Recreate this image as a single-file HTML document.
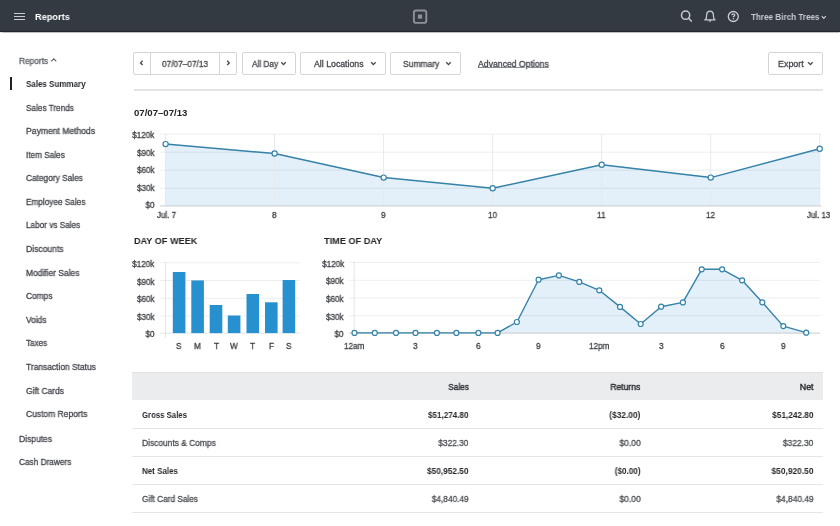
<!DOCTYPE html>
<html><head><meta charset="utf-8"><title>Reports</title>
<style>
*{margin:0;padding:0;box-sizing:border-box}
html,body{width:840px;height:526px;overflow:hidden;background:#fff;font-family:"Liberation Sans", sans-serif}
.t{position:absolute;white-space:nowrap;line-height:1;will-change:transform}
.box{position:absolute;border:1px solid #d3d5d8;border-radius:2px;background:#fff}
.ab{position:absolute}
</style></head>
<body>
<header class="ab" style="left:0;top:0;width:840px;height:31.8px;background:#343a42;border-bottom:1px solid #22262b;box-shadow:0 0.6px 1px rgba(0,0,0,.25)"></header>
<div class="ab" style="left:13.8px;top:12.70px;width:11.6px;height:1.2px;background:#c9ccd0"></div>
<div class="ab" style="left:13.8px;top:15.80px;width:11.6px;height:1.2px;background:#c9ccd0"></div>
<div class="ab" style="left:13.8px;top:18.90px;width:11.6px;height:1.2px;background:#c9ccd0"></div>
<div class="t" style="left:35.20px;transform-origin:0 0;transform:scaleX(0.9600);top:12.17px;font-size:9.6px;font-weight:bold;color:#ffffff;">Reports</div>
<div class="t" style="left:750.70px;transform-origin:0 0;transform:scaleX(0.9332);top:12.64px;font-size:8.7px;font-weight:bold;color:#c9ccd0;">Three Birch Trees</div>
<svg class="ab" style="left:0;top:0" width="840" height="32" viewBox="0 0 840 32">
<rect x="413.9" y="10.5" width="12.4" height="12.4" rx="2.2" fill="none" stroke="#8e9297" stroke-width="1.9"/>
<rect x="417.9" y="14.5" width="4.2" height="4.2" fill="#8c9096"/>
<circle cx="685.6" cy="15.2" r="4.1" fill="none" stroke="#c9ccd0" stroke-width="1.5"/>
<line x1="688.6" y1="18.3" x2="691.3" y2="21.1" stroke="#c9ccd0" stroke-width="1.5" stroke-linecap="round"/>
<path d="M704.9 19.9 L706.3 18.3 L706.7 14.3 Q707 11.1 710 11.1 Q713 11.1 713.3 14.3 L713.7 18.3 L715.1 19.9 Z" fill="none" stroke="#c9ccd0" stroke-width="1.25" stroke-linejoin="round"/>
<path d="M709.0 20.5 Q710 21.6 711.0 20.5" fill="none" stroke="#c9ccd0" stroke-width="1.2"/>
<circle cx="733.3" cy="16.5" r="5.0" fill="none" stroke="#c9ccd0" stroke-width="1.3"/>
<path d="M731.8 15.2 Q731.8 13.8 733.3 13.8 Q734.8 13.8 734.8 15.1 Q734.8 16.0 733.4 16.6 L733.4 17.3" fill="none" stroke="#c9ccd0" stroke-width="1.25"/>
<circle cx="733.4" cy="18.7" r="0.75" fill="#c9ccd0"/>
<path d="M821.8 16.2 L823.8 18.3 L825.8 16.2" fill="none" stroke="#c9ccd0" stroke-width="1.2"/>
</svg>
<svg class="ab" style="left:0;top:0" width="840" height="526" viewBox="0 0 840 526">
<polygon points="165.60,205.9 165.60,144.10 274.62,153.50 383.64,177.60 492.66,188.20 601.68,164.70 710.70,177.60 819.72,148.70 819.72,205.9" fill="#e3f0f9"/>
<line x1="160" y1="134.1" x2="821" y2="134.1" stroke="rgba(0,0,0,0.07)" stroke-width="1"/>
<line x1="160" y1="152.2" x2="821" y2="152.2" stroke="rgba(0,0,0,0.07)" stroke-width="1"/>
<line x1="160" y1="170.2" x2="821" y2="170.2" stroke="rgba(0,0,0,0.07)" stroke-width="1"/>
<line x1="160" y1="188.3" x2="821" y2="188.3" stroke="rgba(0,0,0,0.07)" stroke-width="1"/>
<line x1="165.60" y1="134" x2="165.60" y2="205.9" stroke="#e6e9ec" stroke-width="1"/>
<line x1="274.62" y1="134" x2="274.62" y2="205.9" stroke="#e6e9ec" stroke-width="1"/>
<line x1="383.64" y1="134" x2="383.64" y2="205.9" stroke="#e6e9ec" stroke-width="1"/>
<line x1="492.66" y1="134" x2="492.66" y2="205.9" stroke="#e6e9ec" stroke-width="1"/>
<line x1="601.68" y1="134" x2="601.68" y2="205.9" stroke="#e6e9ec" stroke-width="1"/>
<line x1="710.70" y1="134" x2="710.70" y2="205.9" stroke="#e6e9ec" stroke-width="1"/>
<line x1="819.72" y1="134" x2="819.72" y2="205.9" stroke="#e6e9ec" stroke-width="1"/>
<line x1="160" y1="205.9" x2="821" y2="205.9" stroke="#d2d4d7" stroke-width="1.3"/>
<polyline points="165.60,144.10 274.62,153.50 383.64,177.60 492.66,188.20 601.68,164.70 710.70,177.60 819.72,148.70" fill="none" stroke="#3582a8" stroke-width="1.5" stroke-linejoin="round"/>
<circle cx="165.60" cy="144.10" r="2.6" fill="#fff" stroke="#3582a8" stroke-width="1.2"/>
<circle cx="274.62" cy="153.50" r="2.6" fill="#fff" stroke="#3582a8" stroke-width="1.2"/>
<circle cx="383.64" cy="177.60" r="2.6" fill="#fff" stroke="#3582a8" stroke-width="1.2"/>
<circle cx="492.66" cy="188.20" r="2.6" fill="#fff" stroke="#3582a8" stroke-width="1.2"/>
<circle cx="601.68" cy="164.70" r="2.6" fill="#fff" stroke="#3582a8" stroke-width="1.2"/>
<circle cx="710.70" cy="177.60" r="2.6" fill="#fff" stroke="#3582a8" stroke-width="1.2"/>
<circle cx="819.72" cy="148.70" r="2.6" fill="#fff" stroke="#3582a8" stroke-width="1.2"/>
<line x1="160" y1="262.8" x2="300" y2="262.8" stroke="rgba(0,0,0,0.07)" stroke-width="1"/>
<line x1="160" y1="280.5" x2="300" y2="280.5" stroke="rgba(0,0,0,0.07)" stroke-width="1"/>
<line x1="160" y1="298.3" x2="300" y2="298.3" stroke="rgba(0,0,0,0.07)" stroke-width="1"/>
<line x1="160" y1="315.9" x2="300" y2="315.9" stroke="rgba(0,0,0,0.07)" stroke-width="1"/>
<line x1="165.4" y1="262" x2="165.4" y2="338" stroke="#e3e5e8" stroke-width="1"/>
<line x1="160" y1="333.1" x2="300" y2="333.1" stroke="#e3e5e8" stroke-width="1"/>
<rect x="172.8" y="272.0" width="12.6" height="61.10" fill="#2790cf"/>
<rect x="191.3" y="280.4" width="12.6" height="52.70" fill="#2790cf"/>
<rect x="209.7" y="305.0" width="12.6" height="28.10" fill="#2790cf"/>
<rect x="227.8" y="315.5" width="12.6" height="17.60" fill="#2790cf"/>
<rect x="246.5" y="294.0" width="12.6" height="39.10" fill="#2790cf"/>
<rect x="265.0" y="302.3" width="12.6" height="30.80" fill="#2790cf"/>
<rect x="282.6" y="280.0" width="12.6" height="53.10" fill="#2790cf"/>
<polygon points="354.50,333 354.50,332.90 374.80,332.90 396.00,332.90 415.50,332.90 436.90,332.90 456.40,332.90 478.40,332.90 497.60,332.90 516.90,322.00 538.60,279.70 558.90,275.40 579.30,281.90 599.30,290.30 620.00,306.90 640.70,324.00 661.10,306.70 682.90,302.40 701.70,269.30 722.10,269.30 742.10,280.30 762.30,302.30 783.30,326.10 806.20,332.70 806.20,333" fill="#e3f0f9"/>
<line x1="349" y1="262.4" x2="820" y2="262.4" stroke="rgba(0,0,0,0.07)" stroke-width="1"/>
<line x1="349" y1="280.3" x2="820" y2="280.3" stroke="rgba(0,0,0,0.07)" stroke-width="1"/>
<line x1="349" y1="297.9" x2="820" y2="297.9" stroke="rgba(0,0,0,0.07)" stroke-width="1"/>
<line x1="349" y1="315.7" x2="820" y2="315.7" stroke="rgba(0,0,0,0.07)" stroke-width="1"/>
<line x1="354.2" y1="261" x2="354.2" y2="333" stroke="#e3e5e8" stroke-width="1"/>
<line x1="349" y1="333.2" x2="820" y2="333.2" stroke="#d2d4d7" stroke-width="1.2"/>
<polyline points="354.50,332.90 374.80,332.90 396.00,332.90 415.50,332.90 436.90,332.90 456.40,332.90 478.40,332.90 497.60,332.90 516.90,322.00 538.60,279.70 558.90,275.40 579.30,281.90 599.30,290.30 620.00,306.90 640.70,324.00 661.10,306.70 682.90,302.40 701.70,269.30 722.10,269.30 742.10,280.30 762.30,302.30 783.30,326.10 806.20,332.70" fill="none" stroke="#3582a8" stroke-width="1.4" stroke-linejoin="round"/>
<circle cx="354.50" cy="332.90" r="2.5" fill="#fff" stroke="#3582a8" stroke-width="1.2"/>
<circle cx="374.80" cy="332.90" r="2.5" fill="#fff" stroke="#3582a8" stroke-width="1.2"/>
<circle cx="396.00" cy="332.90" r="2.5" fill="#fff" stroke="#3582a8" stroke-width="1.2"/>
<circle cx="415.50" cy="332.90" r="2.5" fill="#fff" stroke="#3582a8" stroke-width="1.2"/>
<circle cx="436.90" cy="332.90" r="2.5" fill="#fff" stroke="#3582a8" stroke-width="1.2"/>
<circle cx="456.40" cy="332.90" r="2.5" fill="#fff" stroke="#3582a8" stroke-width="1.2"/>
<circle cx="478.40" cy="332.90" r="2.5" fill="#fff" stroke="#3582a8" stroke-width="1.2"/>
<circle cx="497.60" cy="332.90" r="2.5" fill="#fff" stroke="#3582a8" stroke-width="1.2"/>
<circle cx="516.90" cy="322.00" r="2.5" fill="#fff" stroke="#3582a8" stroke-width="1.2"/>
<circle cx="538.60" cy="279.70" r="2.5" fill="#fff" stroke="#3582a8" stroke-width="1.2"/>
<circle cx="558.90" cy="275.40" r="2.5" fill="#fff" stroke="#3582a8" stroke-width="1.2"/>
<circle cx="579.30" cy="281.90" r="2.5" fill="#fff" stroke="#3582a8" stroke-width="1.2"/>
<circle cx="599.30" cy="290.30" r="2.5" fill="#fff" stroke="#3582a8" stroke-width="1.2"/>
<circle cx="620.00" cy="306.90" r="2.5" fill="#fff" stroke="#3582a8" stroke-width="1.2"/>
<circle cx="640.70" cy="324.00" r="2.5" fill="#fff" stroke="#3582a8" stroke-width="1.2"/>
<circle cx="661.10" cy="306.70" r="2.5" fill="#fff" stroke="#3582a8" stroke-width="1.2"/>
<circle cx="682.90" cy="302.40" r="2.5" fill="#fff" stroke="#3582a8" stroke-width="1.2"/>
<circle cx="701.70" cy="269.30" r="2.5" fill="#fff" stroke="#3582a8" stroke-width="1.2"/>
<circle cx="722.10" cy="269.30" r="2.5" fill="#fff" stroke="#3582a8" stroke-width="1.2"/>
<circle cx="742.10" cy="280.30" r="2.5" fill="#fff" stroke="#3582a8" stroke-width="1.2"/>
<circle cx="762.30" cy="302.30" r="2.5" fill="#fff" stroke="#3582a8" stroke-width="1.2"/>
<circle cx="783.30" cy="326.10" r="2.5" fill="#fff" stroke="#3582a8" stroke-width="1.2"/>
<circle cx="806.20" cy="332.70" r="2.5" fill="#fff" stroke="#3582a8" stroke-width="1.2"/>
</svg>
<nav>
<div class="t" style="left:18.90px;transform-origin:0 0;transform:scaleX(0.9565);top:56.94px;font-size:8.7px;font-weight:normal;color:#5f6267;-webkit-text-stroke:0.3px #5f6267;">Reports</div>
<svg class="ab" style="left:0;top:0" width="120" height="80"><path d="M51.3 61.3 L53.8 58.8 L56.3 61.3" fill="none" stroke="#5f6267" stroke-width="1.1"/></svg>
<div class="ab" style="left:9.5px;top:76.6px;width:2.4px;height:13.4px;background:#222"></div>
<div class="t" style="left:25.70px;transform-origin:0 0;transform:scaleX(0.9194);top:79.94px;font-size:8.7px;font-weight:bold;color:#26292d;">Sales Summary</div>
<div class="t" style="left:25.50px;transform-origin:0 0;transform:scaleX(0.9444);top:103.53px;font-size:8.7px;font-weight:normal;color:#44474c;-webkit-text-stroke:0.3px #44474c;">Sales Trends</div>
<div class="t" style="left:25.50px;transform-origin:0 0;transform:scaleX(0.9867);top:127.12px;font-size:8.7px;font-weight:normal;color:#44474c;-webkit-text-stroke:0.3px #44474c;">Payment Methods</div>
<div class="t" style="left:25.50px;transform-origin:0 0;transform:scaleX(0.9453);top:150.71px;font-size:8.7px;font-weight:normal;color:#44474c;-webkit-text-stroke:0.3px #44474c;">Item Sales</div>
<div class="t" style="left:25.50px;transform-origin:0 0;transform:scaleX(0.9561);top:174.30px;font-size:8.7px;font-weight:normal;color:#44474c;-webkit-text-stroke:0.3px #44474c;">Category Sales</div>
<div class="t" style="left:25.50px;transform-origin:0 0;transform:scaleX(0.9461);top:197.89px;font-size:8.7px;font-weight:normal;color:#44474c;-webkit-text-stroke:0.3px #44474c;">Employee Sales</div>
<div class="t" style="left:25.50px;transform-origin:0 0;transform:scaleX(0.9431);top:221.48px;font-size:8.7px;font-weight:normal;color:#44474c;-webkit-text-stroke:0.3px #44474c;">Labor vs Sales</div>
<div class="t" style="left:25.50px;transform-origin:0 0;transform:scaleX(0.9828);top:245.07px;font-size:8.7px;font-weight:normal;color:#44474c;-webkit-text-stroke:0.3px #44474c;">Discounts</div>
<div class="t" style="left:25.50px;transform-origin:0 0;transform:scaleX(0.9701);top:268.66px;font-size:8.7px;font-weight:normal;color:#44474c;-webkit-text-stroke:0.3px #44474c;">Modifier Sales</div>
<div class="t" style="left:25.50px;transform-origin:0 0;transform:scaleX(0.9625);top:292.25px;font-size:8.7px;font-weight:normal;color:#44474c;-webkit-text-stroke:0.3px #44474c;">Comps</div>
<div class="t" style="left:25.50px;transform-origin:0 0;transform:scaleX(0.9593);top:315.84px;font-size:8.7px;font-weight:normal;color:#44474c;-webkit-text-stroke:0.3px #44474c;">Voids</div>
<div class="t" style="left:25.50px;transform-origin:0 0;transform:scaleX(0.9338);top:339.43px;font-size:8.7px;font-weight:normal;color:#44474c;-webkit-text-stroke:0.3px #44474c;">Taxes</div>
<div class="t" style="left:25.50px;transform-origin:0 0;transform:scaleX(0.9680);top:363.02px;font-size:8.7px;font-weight:normal;color:#44474c;-webkit-text-stroke:0.3px #44474c;">Transaction Status</div>
<div class="t" style="left:25.50px;transform-origin:0 0;transform:scaleX(0.9691);top:386.61px;font-size:8.7px;font-weight:normal;color:#44474c;-webkit-text-stroke:0.3px #44474c;">Gift Cards</div>
<div class="t" style="left:25.50px;transform-origin:0 0;transform:scaleX(0.9766);top:410.20px;font-size:8.7px;font-weight:normal;color:#44474c;-webkit-text-stroke:0.3px #44474c;">Custom Reports</div>
<div class="t" style="left:18.80px;transform-origin:0 0;transform:scaleX(0.9760);top:434.54px;font-size:8.7px;font-weight:normal;color:#44474c;-webkit-text-stroke:0.3px #44474c;">Disputes</div>
<div class="t" style="left:18.80px;transform-origin:0 0;transform:scaleX(0.9501);top:457.94px;font-size:8.7px;font-weight:normal;color:#44474c;-webkit-text-stroke:0.3px #44474c;">Cash Drawers</div>
</nav>
<div class="box" style="left:132.5px;top:51.5px;width:104.2px;height:23.1px"></div>
<div class="ab" style="left:150.2px;top:51.5px;width:1px;height:23.1px;background:#d3d5d8"></div>
<div class="ab" style="left:218.6px;top:51.5px;width:1px;height:23.1px;background:#d3d5d8"></div>
<div class="t" style="left:161.90px;transform-origin:0 0;transform:scaleX(0.9521);top:59.64px;font-size:8.7px;font-weight:normal;color:#44474c;-webkit-text-stroke:0.3px #44474c;">07/07–07/13</div>
<div class="box" style="left:242.2px;top:51.5px;width:53.4px;height:23.1px"></div>
<div class="t" style="left:251.80px;transform-origin:0 0;transform:scaleX(0.9480);top:59.64px;font-size:8.7px;font-weight:normal;color:#44474c;-webkit-text-stroke:0.3px #44474c;">All Day</div>
<div class="box" style="left:300.3px;top:51.5px;width:85.7px;height:23.1px"></div>
<div class="t" style="left:314.00px;transform-origin:0 0;transform:scaleX(1.0068);top:59.64px;font-size:8.7px;font-weight:normal;color:#44474c;-webkit-text-stroke:0.3px #44474c;">All Locations</div>
<div class="box" style="left:390.4px;top:51.5px;width:70.5px;height:23.1px"></div>
<div class="t" style="left:403.20px;transform-origin:0 0;transform:scaleX(0.9792);top:59.64px;font-size:8.7px;font-weight:normal;color:#44474c;-webkit-text-stroke:0.3px #44474c;">Summary</div>
<div class="t" style="left:477.80px;transform-origin:0 0;transform:scaleX(0.9958);top:59.64px;font-size:8.7px;font-weight:normal;color:#44474c;-webkit-text-stroke:0.3px #44474c;text-decoration:underline;text-decoration-color:#8f9297;text-decoration-thickness:0.8px;text-underline-offset:0px">Advanced Options</div>
<div class="box" style="left:767.7px;top:51.5px;width:54.9px;height:23.1px"></div>
<div class="t" style="left:777.90px;transform-origin:0 0;transform:scaleX(1.0235);top:59.64px;font-size:8.7px;font-weight:normal;color:#44474c;-webkit-text-stroke:0.3px #44474c;">Export</div>
<svg class="ab" style="left:0;top:40px" width="840" height="40" viewBox="0 40 840 40">
<g fill="none" stroke="#44474c" stroke-width="1.35">
<path d="M142.6 60.8 L140.6 62.9 L142.6 65"/>
<path d="M227.2 60.8 L229.2 62.9 L227.2 65"/>
<path d="M281.3 62.2 L283.5 64.6 L285.7 62.2"/>
<path d="M371.2 62.2 L373.4 64.6 L375.6 62.2"/>
<path d="M446.3 62.2 L448.5 64.6 L450.7 62.2"/>
<path d="M808.2 62.2 L810.4 64.6 L812.6 62.2"/>
</g></svg>
<div class="ab" style="left:134px;top:89px;width:688.6px;height:2px;background:#e3e4e6"></div>
<div class="t" style="left:134.00px;transform-origin:0 0;transform:scaleX(0.9933);top:108.37px;font-size:9.6px;font-weight:bold;color:#222427;">07/07–07/13</div>
<div class="t" style="right:685.50px;transform-origin:100% 0;transform:scaleX(0.9500);top:130.92px;font-size:8.6px;font-weight:normal;color:#3d4045;-webkit-text-stroke:0.3px #3d4045;">$120k</div>
<div class="t" style="right:685.50px;transform-origin:100% 0;transform:scaleX(0.9500);top:148.52px;font-size:8.6px;font-weight:normal;color:#3d4045;-webkit-text-stroke:0.3px #3d4045;">$90k</div>
<div class="t" style="right:685.50px;transform-origin:100% 0;transform:scaleX(0.9500);top:166.22px;font-size:8.6px;font-weight:normal;color:#3d4045;-webkit-text-stroke:0.3px #3d4045;">$60k</div>
<div class="t" style="right:685.50px;transform-origin:100% 0;transform:scaleX(0.9500);top:183.92px;font-size:8.6px;font-weight:normal;color:#3d4045;-webkit-text-stroke:0.3px #3d4045;">$30k</div>
<div class="t" style="right:685.50px;transform-origin:100% 0;transform:scaleX(0.9500);top:201.22px;font-size:8.6px;font-weight:normal;color:#3d4045;-webkit-text-stroke:0.3px #3d4045;">$0</div>
<div class="t" style="left:157.00px;transform-origin:0 0;transform:scaleX(0.9247);top:211.32px;font-size:8.6px;font-weight:normal;color:#3d4045;-webkit-text-stroke:0.3px #3d4045;">Jul. 7</div>
<div class="t" style="left:272.35px;transform-origin:0 0;transform:scaleX(0.9500);top:211.32px;font-size:8.6px;font-weight:normal;color:#3d4045;-webkit-text-stroke:0.3px #3d4045;">8</div>
<div class="t" style="left:381.37px;transform-origin:0 0;transform:scaleX(0.9500);top:211.32px;font-size:8.6px;font-weight:normal;color:#3d4045;-webkit-text-stroke:0.3px #3d4045;">9</div>
<div class="t" style="left:488.12px;transform-origin:0 0;transform:scaleX(0.9500);top:211.32px;font-size:8.6px;font-weight:normal;color:#3d4045;-webkit-text-stroke:0.3px #3d4045;">10</div>
<div class="t" style="left:597.44px;transform-origin:0 0;transform:scaleX(0.9500);top:211.32px;font-size:8.6px;font-weight:normal;color:#3d4045;-webkit-text-stroke:0.3px #3d4045;">11</div>
<div class="t" style="left:706.16px;transform-origin:0 0;transform:scaleX(0.9500);top:211.32px;font-size:8.6px;font-weight:normal;color:#3d4045;-webkit-text-stroke:0.3px #3d4045;">12</div>
<div class="t" style="right:10.00px;transform-origin:100% 0;transform:scaleX(0.9239);top:211.32px;font-size:8.6px;font-weight:normal;color:#3d4045;-webkit-text-stroke:0.3px #3d4045;">Jul. 13</div>
<div class="t" style="right:685.30px;transform-origin:100% 0;transform:scaleX(0.9500);top:259.92px;font-size:8.6px;font-weight:normal;color:#3d4045;-webkit-text-stroke:0.3px #3d4045;">$120k</div>
<div class="t" style="right:685.30px;transform-origin:100% 0;transform:scaleX(0.9500);top:277.62px;font-size:8.6px;font-weight:normal;color:#3d4045;-webkit-text-stroke:0.3px #3d4045;">$90k</div>
<div class="t" style="right:685.30px;transform-origin:100% 0;transform:scaleX(0.9500);top:295.42px;font-size:8.6px;font-weight:normal;color:#3d4045;-webkit-text-stroke:0.3px #3d4045;">$60k</div>
<div class="t" style="right:685.30px;transform-origin:100% 0;transform:scaleX(0.9500);top:313.02px;font-size:8.6px;font-weight:normal;color:#3d4045;-webkit-text-stroke:0.3px #3d4045;">$30k</div>
<div class="t" style="right:685.30px;transform-origin:100% 0;transform:scaleX(0.9500);top:330.12px;font-size:8.6px;font-weight:normal;color:#3d4045;-webkit-text-stroke:0.3px #3d4045;">$0</div>
<div class="t" style="left:176.38px;transform-origin:0 0;transform:scaleX(0.9500);top:341.82px;font-size:8.6px;font-weight:normal;color:#3d4045;-webkit-text-stroke:0.3px #3d4045;">S</div>
<div class="t" style="left:194.19px;transform-origin:0 0;transform:scaleX(0.9500);top:341.82px;font-size:8.6px;font-weight:normal;color:#3d4045;-webkit-text-stroke:0.3px #3d4045;">M</div>
<div class="t" style="left:213.51px;transform-origin:0 0;transform:scaleX(0.9500);top:341.82px;font-size:8.6px;font-weight:normal;color:#3d4045;-webkit-text-stroke:0.3px #3d4045;">T</div>
<div class="t" style="left:230.24px;transform-origin:0 0;transform:scaleX(0.9500);top:341.82px;font-size:8.6px;font-weight:normal;color:#3d4045;-webkit-text-stroke:0.3px #3d4045;">W</div>
<div class="t" style="left:250.31px;transform-origin:0 0;transform:scaleX(0.9500);top:341.82px;font-size:8.6px;font-weight:normal;color:#3d4045;-webkit-text-stroke:0.3px #3d4045;">T</div>
<div class="t" style="left:268.81px;transform-origin:0 0;transform:scaleX(0.9500);top:341.82px;font-size:8.6px;font-weight:normal;color:#3d4045;-webkit-text-stroke:0.3px #3d4045;">F</div>
<div class="t" style="left:286.18px;transform-origin:0 0;transform:scaleX(0.9500);top:341.82px;font-size:8.6px;font-weight:normal;color:#3d4045;-webkit-text-stroke:0.3px #3d4045;">S</div>
<div class="t" style="right:496.00px;transform-origin:100% 0;transform:scaleX(0.9500);top:259.52px;font-size:8.6px;font-weight:normal;color:#3d4045;-webkit-text-stroke:0.3px #3d4045;">$120k</div>
<div class="t" style="right:496.00px;transform-origin:100% 0;transform:scaleX(0.9500);top:277.42px;font-size:8.6px;font-weight:normal;color:#3d4045;-webkit-text-stroke:0.3px #3d4045;">$90k</div>
<div class="t" style="right:496.00px;transform-origin:100% 0;transform:scaleX(0.9500);top:295.02px;font-size:8.6px;font-weight:normal;color:#3d4045;-webkit-text-stroke:0.3px #3d4045;">$60k</div>
<div class="t" style="right:496.00px;transform-origin:100% 0;transform:scaleX(0.9500);top:312.82px;font-size:8.6px;font-weight:normal;color:#3d4045;-webkit-text-stroke:0.3px #3d4045;">$30k</div>
<div class="t" style="right:496.00px;transform-origin:100% 0;transform:scaleX(0.9500);top:330.02px;font-size:8.6px;font-weight:normal;color:#3d4045;-webkit-text-stroke:0.3px #3d4045;">$0</div>
<div class="t" style="left:344.29px;transform-origin:0 0;transform:scaleX(0.9500);top:341.62px;font-size:8.6px;font-weight:normal;color:#3d4045;-webkit-text-stroke:0.3px #3d4045;">12am</div>
<div class="t" style="left:413.23px;transform-origin:0 0;transform:scaleX(0.9500);top:341.62px;font-size:8.6px;font-weight:normal;color:#3d4045;-webkit-text-stroke:0.3px #3d4045;">3</div>
<div class="t" style="left:476.13px;transform-origin:0 0;transform:scaleX(0.9500);top:341.62px;font-size:8.6px;font-weight:normal;color:#3d4045;-webkit-text-stroke:0.3px #3d4045;">6</div>
<div class="t" style="left:536.33px;transform-origin:0 0;transform:scaleX(0.9500);top:341.62px;font-size:8.6px;font-weight:normal;color:#3d4045;-webkit-text-stroke:0.3px #3d4045;">9</div>
<div class="t" style="left:589.09px;transform-origin:0 0;transform:scaleX(0.9500);top:341.62px;font-size:8.6px;font-weight:normal;color:#3d4045;-webkit-text-stroke:0.3px #3d4045;">12pm</div>
<div class="t" style="left:658.83px;transform-origin:0 0;transform:scaleX(0.9500);top:341.62px;font-size:8.6px;font-weight:normal;color:#3d4045;-webkit-text-stroke:0.3px #3d4045;">3</div>
<div class="t" style="left:719.83px;transform-origin:0 0;transform:scaleX(0.9500);top:341.62px;font-size:8.6px;font-weight:normal;color:#3d4045;-webkit-text-stroke:0.3px #3d4045;">6</div>
<div class="t" style="left:781.03px;transform-origin:0 0;transform:scaleX(0.9500);top:341.62px;font-size:8.6px;font-weight:normal;color:#3d4045;-webkit-text-stroke:0.3px #3d4045;">9</div>
<div class="t" style="left:134.00px;transform-origin:0 0;transform:scaleX(0.9421);top:235.69px;font-size:9.7px;font-weight:bold;color:#222427;">DAY OF WEEK</div>
<div class="t" style="left:324.00px;transform-origin:0 0;transform:scaleX(0.9472);top:235.69px;font-size:9.7px;font-weight:bold;color:#222427;">TIME OF DAY</div>
<div class="ab" style="left:132px;top:371.8px;width:690.6px;height:28.6px;background:#ebeced;border-top:1px solid #e0e1e3"></div>
<div class="ab" style="left:132px;top:427.70px;width:690.6px;height:1px;background:#e4e5e7"></div>
<div class="ab" style="left:132px;top:455.90px;width:690.6px;height:1px;background:#e4e5e7"></div>
<div class="ab" style="left:132px;top:483.80px;width:690.6px;height:1px;background:#e4e5e7"></div>
<div class="ab" style="left:132px;top:512.40px;width:690.6px;height:1px;background:#e4e5e7"></div>
<div class="t" style="right:371.50px;transform-origin:100% 0;transform:scaleX(0.9386);top:382.94px;font-size:8.7px;font-weight:normal;color:#2a2d31;-webkit-text-stroke:0.3px #2a2d31;-webkit-text-stroke:0.4px #2a2d31">Sales</div>
<div class="t" style="right:199.40px;transform-origin:100% 0;transform:scaleX(0.9894);top:382.94px;font-size:8.7px;font-weight:normal;color:#2a2d31;-webkit-text-stroke:0.3px #2a2d31;-webkit-text-stroke:0.4px #2a2d31">Returns</div>
<div class="t" style="right:26.80px;transform-origin:100% 0;transform:scaleX(1.0199);top:382.94px;font-size:8.7px;font-weight:normal;color:#2a2d31;-webkit-text-stroke:0.3px #2a2d31;-webkit-text-stroke:0.4px #2a2d31">Net</div>
<div class="t" style="left:142.00px;transform-origin:0 0;transform:scaleX(0.8938);top:410.94px;font-size:8.7px;font-weight:bold;color:#26292d;">Gross Sales</div>
<div class="t" style="right:371.50px;transform-origin:100% 0;transform:scaleX(0.9314);top:410.94px;font-size:8.7px;font-weight:bold;color:#26292d;">$51,274.80</div>
<div class="t" style="right:199.40px;transform-origin:100% 0;transform:scaleX(0.9611);top:410.94px;font-size:8.7px;font-weight:bold;color:#26292d;">($32.00)</div>
<div class="t" style="right:26.80px;transform-origin:100% 0;transform:scaleX(0.9498);top:410.94px;font-size:8.7px;font-weight:bold;color:#26292d;">$51,242.80</div>
<div class="t" style="left:142.00px;transform-origin:0 0;transform:scaleX(0.9673);top:438.89px;font-size:8.7px;font-weight:normal;color:#4a4d52;-webkit-text-stroke:0.3px #4a4d52;">Discounts &amp; Comps</div>
<div class="t" style="right:371.50px;transform-origin:100% 0;transform:scaleX(0.9584);top:438.89px;font-size:8.7px;font-weight:normal;color:#4a4d52;-webkit-text-stroke:0.3px #4a4d52;">$322.30</div>
<div class="t" style="right:199.40px;transform-origin:100% 0;transform:scaleX(0.9793);top:438.89px;font-size:8.7px;font-weight:normal;color:#4a4d52;-webkit-text-stroke:0.3px #4a4d52;">$0.00</div>
<div class="t" style="right:26.80px;transform-origin:100% 0;transform:scaleX(0.9743);top:438.89px;font-size:8.7px;font-weight:normal;color:#4a4d52;-webkit-text-stroke:0.3px #4a4d52;">$322.30</div>
<div class="t" style="left:142.00px;transform-origin:0 0;transform:scaleX(0.9176);top:466.84px;font-size:8.7px;font-weight:bold;color:#26292d;">Net Sales</div>
<div class="t" style="right:371.50px;transform-origin:100% 0;transform:scaleX(0.9544);top:466.84px;font-size:8.7px;font-weight:bold;color:#26292d;">$50,952.50</div>
<div class="t" style="right:199.40px;transform-origin:100% 0;transform:scaleX(0.9371);top:466.84px;font-size:8.7px;font-weight:bold;color:#26292d;">($0.00)</div>
<div class="t" style="right:26.80px;transform-origin:100% 0;transform:scaleX(0.9659);top:466.84px;font-size:8.7px;font-weight:bold;color:#26292d;">$50,920.50</div>
<div class="t" style="left:142.00px;transform-origin:0 0;transform:scaleX(0.9490);top:494.79px;font-size:8.7px;font-weight:normal;color:#4a4d52;-webkit-text-stroke:0.3px #4a4d52;">Gift Card Sales</div>
<div class="t" style="right:371.50px;transform-origin:100% 0;transform:scaleX(0.9546);top:494.79px;font-size:8.7px;font-weight:normal;color:#4a4d52;-webkit-text-stroke:0.3px #4a4d52;">$4,840.49</div>
<div class="t" style="right:199.40px;transform-origin:100% 0;transform:scaleX(0.9793);top:494.79px;font-size:8.7px;font-weight:normal;color:#4a4d52;-webkit-text-stroke:0.3px #4a4d52;">$0.00</div>
<div class="t" style="right:26.80px;transform-origin:100% 0;transform:scaleX(0.9649);top:494.79px;font-size:8.7px;font-weight:normal;color:#4a4d52;-webkit-text-stroke:0.3px #4a4d52;">$4,840.49</div>

</body></html>
